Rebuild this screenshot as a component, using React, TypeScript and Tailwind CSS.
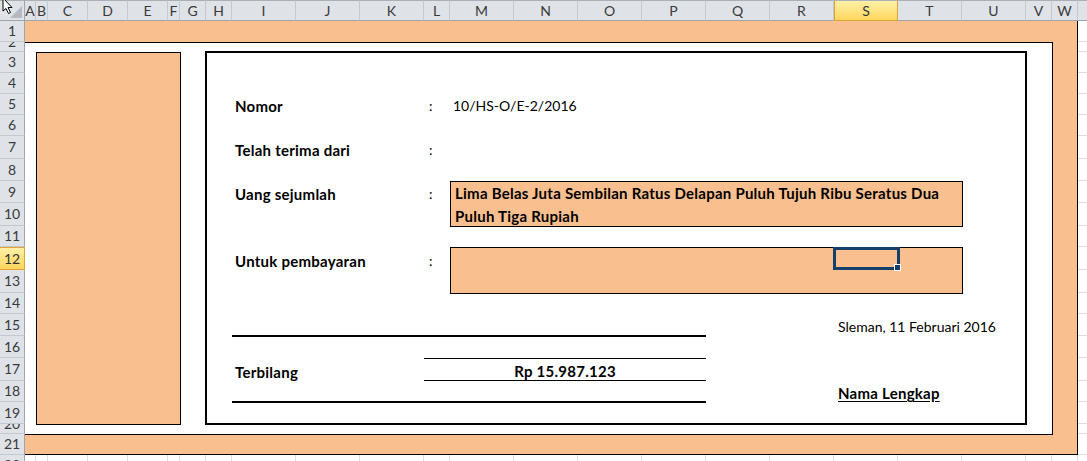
const COLS: [string, string][] = [
  ['A', 'col-start-2'], ['B', 'col-start-3'], ['C', 'col-start-4'], ['D', 'col-start-5'],
  ['E', 'col-start-6'], ['F', 'col-start-7'], ['G', 'col-start-8'], ['H', 'col-start-9'],
  ['I', 'col-start-10'], ['J', 'col-start-11'], ['K', 'col-start-12'], ['L', 'col-start-13'],
  ['M', 'col-start-14'], ['N', 'col-start-15'], ['O', 'col-start-16'], ['P', 'col-start-17'],
  ['Q', 'col-start-18'], ['R', 'col-start-19'], ['S', 'col-start-20'], ['T', 'col-start-21'],
  ['U', 'col-start-22'], ['V', 'col-start-23'], ['W', 'col-start-24'], ['X', 'col-start-25'],
]

const ROWS: [number, string][] = [
  [1, 'row-start-2'], [2, 'row-start-3'], [3, 'row-start-4'], [4, 'row-start-5'],
  [5, 'row-start-6'], [6, 'row-start-7'], [7, 'row-start-8'], [8, 'row-start-9'],
  [9, 'row-start-10'], [10, 'row-start-11'], [11, 'row-start-12'], [12, 'row-start-13'],
  [13, 'row-start-14'], [14, 'row-start-15'], [15, 'row-start-16'], [16, 'row-start-17'],
  [17, 'row-start-18'], [18, 'row-start-19'], [19, 'row-start-20'], [20, 'row-start-21'],
  [21, 'row-start-22'], [22, 'row-start-23'],
]

const SHORT_ROWS = [2, 20]

// bold cells in the sheet are a touch wider than Lato bold, so they get a little tracking
const BOLD = 'font-bold text-[15px] tracking-[0.25px]'

function Txt({ pos, className = '', children }: { pos: string; className?: string; children?: React.ReactNode }) {
  return (
    <div className={`${pos} flex items-end whitespace-nowrap text-[14px] leading-[18px] text-black ${className}`}>
      {children}
    </div>
  )
}

export default function App() {
  return (
    <div className="w-[1087px] h-[461px] overflow-hidden bg-white font-['Lato',sans-serif]">
      <div className="grid grid-cols-[25px_11px_12px_40px_40px_40px_12px_26px_26px_64px_64px_64px_26px_64px_64px_64px_64px_64px_64px_64px_64px_64px_26px_26px_64px] grid-rows-[21px_21px_10px_21px_21px_21px_21px_23px_22px_22px_23px_21px_23px_23px_21px_22px_22px_23px_21px_22px_10px_21px_21px]">
        {/* corner */}
        <div className="col-start-1 row-start-1 relative bg-[#dfe3e8] border-t border-[#a9b0b8] border-r border-r-[#9ea5ae] border-b border-b-[#9ea5ae]">
          <svg className="absolute right-[2px] bottom-[2px]" width="12" height="12" viewBox="0 0 12 12">
            <path d="M12 0 L12 12 L0 12 Z" fill="#b4bac2" />
          </svg>
        </div>

        {/* column headers */}
        {COLS.map(([l, pos]) => (
          <div
            key={l}
            className={`${pos} row-start-1 flex items-center justify-center overflow-hidden text-[14px] border-t border-t-[#a9b0b8] border-b ${
              l === 'S'
                ? 'bg-gradient-to-b from-[#fff0a6] to-[#ffd65c] border-x border-[#e2a23a] text-[#333]'
                : 'bg-[#dfe3e8] border-r border-r-[#c3c9d0] border-b-[#9ea5ae] text-[#3a3a3a]'
            }`}
          >
            {l === 'X' ? '' : l}
          </div>
        ))}

        {/* row headers */}
        {ROWS.map(([n, pos]) => (
          <div
            key={n}
            className={`${pos} col-start-1 flex justify-center overflow-hidden text-[14px] border-r ${
              SHORT_ROWS.includes(n) ? 'items-start' : 'items-center'
            } ${
              n === 12
                ? 'bg-gradient-to-b from-[#fff0a6] to-[#ffd65c] border-y border-[#e2a23a] text-[#333]'
                : 'bg-[#dfe3e8] border-b border-b-[#c3c9d0] border-r-[#9ea5ae] text-[#3a3a3a]'
            }`}
          >
            <span className={SHORT_ROWS.includes(n) ? 'leading-[10px] h-[10px] overflow-hidden -mt-[5px]' : 'leading-[18px]'}>
              {n}
            </span>
          </div>
        ))}

        {/* gridlines outside the frame */}
        {ROWS.map(([n, pos]) => (
          <div key={`x${n}`} className={`${pos} col-start-25 border-b border-[#dadcdd]`} />
        ))}
        {COLS.map(([l, pos]) => (
          <div key={`g${l}`} className={`${pos} row-start-23 border-r border-[#dadcdd]`} />
        ))}

        {/* orange frame and white sheet */}
        <div className="col-start-2 col-end-25 row-start-2 row-end-23 bg-[#f9bf8f] border-r border-b border-black" />
        <div className="col-start-2 col-end-24 row-start-3 row-end-22 bg-white border-t border-r border-b border-black -mr-px -mb-px" />

        {/* left stub box */}
        <div className="col-start-3 col-end-8 row-start-4 row-end-21 bg-[#f9bf8f] border border-black -mr-px -mb-px" />

        {/* receipt body */}
        <Txt pos="col-start-10 col-span-3 row-start-6" className={`pl-[3px] ${BOLD}`}>Nomor</Txt>
        <Txt pos="col-start-13 row-start-6" className="pl-[5px]">:</Txt>
        <Txt pos="col-start-14 col-span-4 row-start-6" className="pl-[3px]">10/HS-O/E-2/2016</Txt>

        <Txt pos="col-start-10 col-span-3 row-start-8" className={`pl-[3px] ${BOLD}`}>Telah terima dari</Txt>
        <Txt pos="col-start-13 row-start-8" className="pl-[5px]">:</Txt>

        <Txt pos="col-start-10 col-span-3 row-start-10" className={`pl-[3px] ${BOLD}`}>Uang sejumlah</Txt>
        <Txt pos="col-start-13 row-start-10" className="pl-[5px]">:</Txt>
        <div className={`col-start-14 col-end-22 row-start-10 row-end-12 bg-[#f9bf8f] border border-black -mr-px -mb-px pl-[4px] leading-[23px] text-black whitespace-nowrap ${BOLD}`}>
          Lima Belas Juta Sembilan Ratus Delapan Puluh Tujuh Ribu Seratus Dua
          <br />
          Puluh Tiga Rupiah
        </div>

        <Txt pos="col-start-10 col-span-3 row-start-13" className={`pl-[3px] ${BOLD}`}>Untuk pembayaran</Txt>
        <Txt pos="col-start-13 row-start-13" className="pl-[5px]">:</Txt>
        <div className="col-start-14 col-end-22 row-start-13 row-end-15 bg-[#f9bf8f] border border-black -mr-px -mb-px" />

        <Txt pos="col-start-20 col-span-3 row-start-16" className="pl-[4px]">Sleman, 11 Februari 2016</Txt>
        <div className="col-start-10 col-end-18 row-start-16 border-b-2 border-black -mb-px" />

        <div className={`col-start-13 col-end-18 row-start-18 flex items-end justify-center border-y border-black leading-[18px] text-black ${BOLD}`}>
          Rp 15.987.123
        </div>
        <Txt pos="col-start-10 col-span-3 row-start-18" className={`pl-[3px] ${BOLD}`}>Terbilang</Txt>

        <div className="col-start-10 col-end-18 row-start-19 border-b-2 border-black -mb-px" />
        <Txt pos="col-start-20 col-span-3 row-start-19" className={`pl-[4px] ${BOLD}`}>
          <span className="underline underline-offset-[2px]">Nama Lengkap</span>
        </Txt>

        {/* receipt outline */}
        <div className="col-start-9 col-end-23 row-start-4 row-end-21 border-2 border-black -m-px" />

        {/* active cell S12 */}
        <div className="col-start-20 row-start-13 relative -ml-px -mr-[2px] border-[3px] border-[#123f6c] shadow-[0_-1px_0_#fff]">
          <div className="absolute -right-[4px] -bottom-[4px] w-[7px] h-[7px] bg-[#123f6c] border border-white" />
        </div>
      </div>

      {/* mouse pointer */}
      <svg className="fixed left-0 top-0" width="16" height="16" viewBox="0 0 16 16">
        <path d="M3 -2 L3 11 L6 8.5 L8.5 13.5 L10.5 12.5 L8 7.5 L12 7.5 Z" fill="#fff" stroke="#000" strokeWidth="1" />
      </svg>
    </div>
  )
}
